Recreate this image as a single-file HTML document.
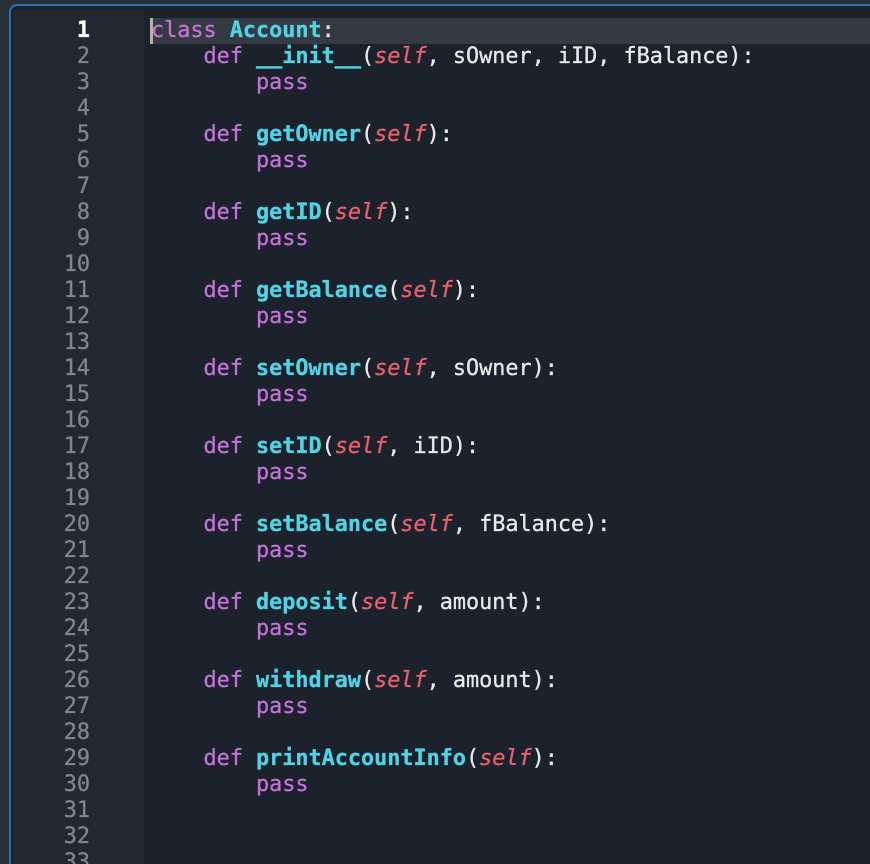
<!DOCTYPE html>
<html><head><style>
html,body{margin:0;padding:0;background:#2a3038;width:870px;height:864px;overflow:hidden;position:relative}
#ed{position:absolute;left:9px;top:4px;width:859px;height:860px;border:2px solid #2e6fae;border-right:none;border-bottom:none;border-radius:8px 0 0 0;background:#1b222b;overflow:hidden}
#gut{position:absolute;left:2px;top:4px;width:131px;height:860px;background:#222831}
#hl{position:absolute;left:139px;top:12px;width:720px;height:26px;background:#333a41}
#cur{position:absolute;left:139px;top:12px;width:3px;height:26px;background:#b8b0a0}
pre{margin:0;position:absolute;top:12px;font-family:"DejaVu Sans Mono","Liberation Mono",monospace;font-size:21.8px;line-height:26px;-webkit-text-stroke:0.3px currentColor}
#nums{left:2px;width:77px;text-align:right;color:#80858c}
#nums b{color:#fff}
#code{left:140px;color:#e8eaec}
.k{color:#c471d8}.f{color:#52d2e4;font-weight:bold}.s{color:#e8606c;font-style:italic}
</style></head><body>
<div id="ed">
<div id="gut"></div>
<div id="hl"></div><div id="cur"></div>
<pre id="nums"><b>1</b>
2
3
4
5
6
7
8
9
10
11
12
13
14
15
16
17
18
19
20
21
22
23
24
25
26
27
28
29
30
31
32
33</pre>
<pre id="code"><span class="k">class</span> <span class="f">Account</span>:
    <span class="k">def</span> <span class="f">__init__</span>(<span class="s">self</span>, sOwner, iID, fBalance):
        <span class="k">pass</span>

    <span class="k">def</span> <span class="f">getOwner</span>(<span class="s">self</span>):
        <span class="k">pass</span>

    <span class="k">def</span> <span class="f">getID</span>(<span class="s">self</span>):
        <span class="k">pass</span>

    <span class="k">def</span> <span class="f">getBalance</span>(<span class="s">self</span>):
        <span class="k">pass</span>

    <span class="k">def</span> <span class="f">setOwner</span>(<span class="s">self</span>, sOwner):
        <span class="k">pass</span>

    <span class="k">def</span> <span class="f">setID</span>(<span class="s">self</span>, iID):
        <span class="k">pass</span>

    <span class="k">def</span> <span class="f">setBalance</span>(<span class="s">self</span>, fBalance):
        <span class="k">pass</span>

    <span class="k">def</span> <span class="f">deposit</span>(<span class="s">self</span>, amount):
        <span class="k">pass</span>

    <span class="k">def</span> <span class="f">withdraw</span>(<span class="s">self</span>, amount):
        <span class="k">pass</span>

    <span class="k">def</span> <span class="f">printAccountInfo</span>(<span class="s">self</span>):
        <span class="k">pass</span></pre>
</div>
</body></html>
